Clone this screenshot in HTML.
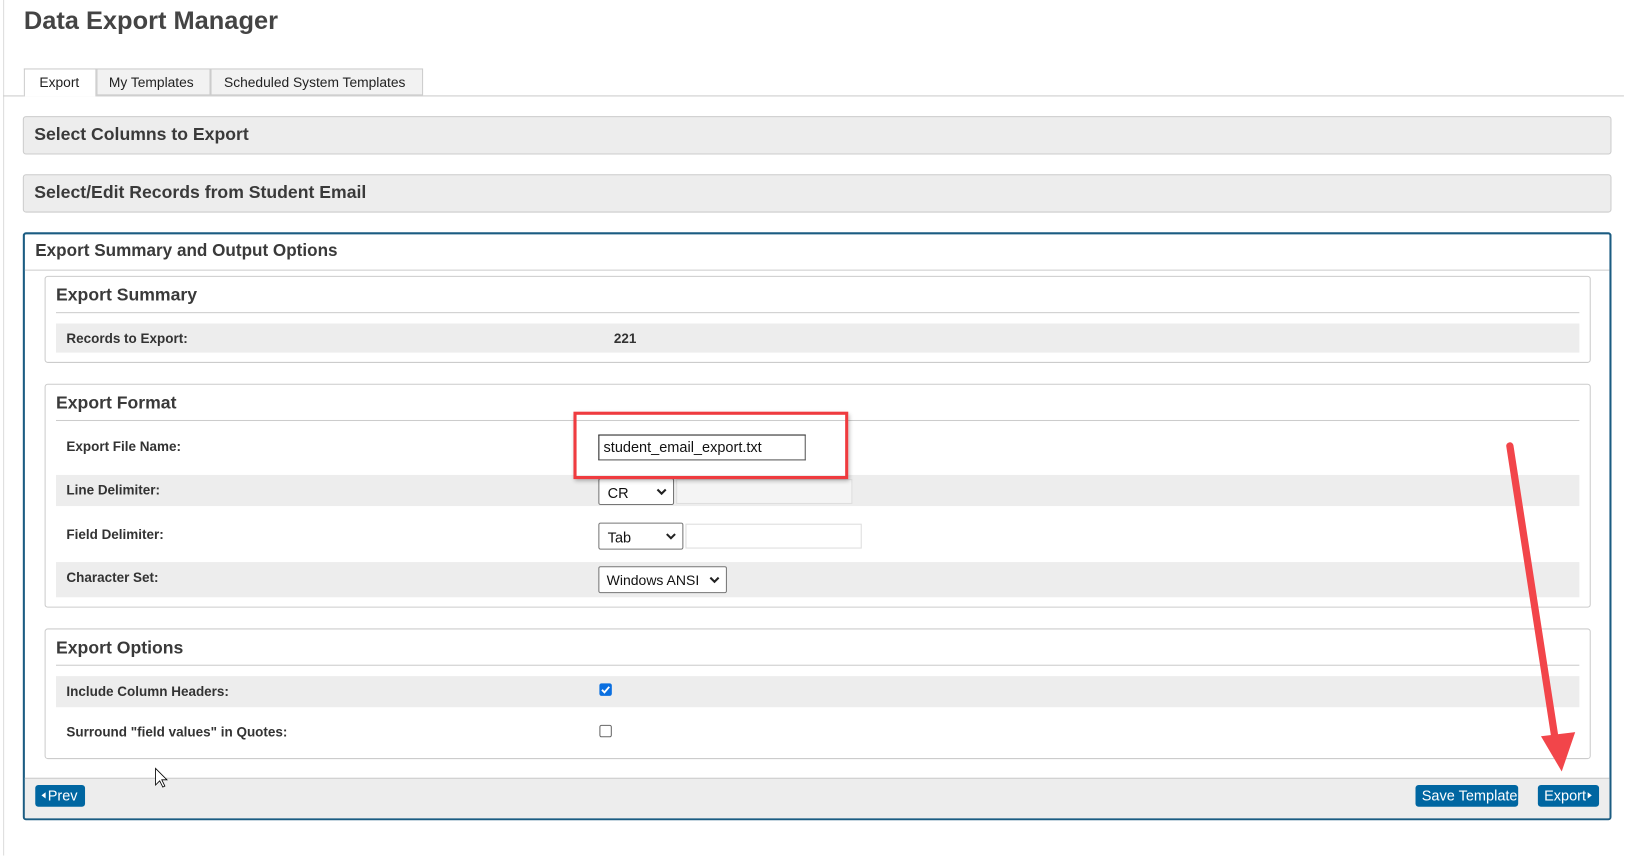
<!DOCTYPE html>
<html><head><style>
*{box-sizing:border-box;margin:0;padding:0}
body{width:1629px;height:825px;background:#fff;font-family:"Liberation Sans",Arial,sans-serif;color:#333;position:relative;overflow:hidden}
#w{position:absolute;left:0;top:0;width:1571px;height:796px;transform:scale(1.037);transform-origin:0 0}
.a{position:absolute}
.lbl{position:absolute;left:64px;font-size:13px;font-weight:bold;color:#333}
.h{position:absolute;font-size:17px;font-weight:bold;color:#3a3a3a}
.sel{position:absolute;height:26px;border:1px solid #767676;border-radius:2px;background:#fff;font-size:14px;padding:5px 0 0 8px;color:#111}
.sel svg{position:absolute;right:6px;top:9px}
.btn{position:absolute;top:757px;height:21px;background:#0066a1;color:#fff;border-radius:3px;font-size:14px;padding:2px 6px 0;white-space:nowrap}
.tri{display:inline-block;width:0;height:0;border-top:3.5px solid transparent;border-bottom:3.5px solid transparent;vertical-align:2px}
</style></head><body><div id="w">
<div class="a" style="left:3px;top:0;width:1px;height:825px;background:#ddd"></div>
<div class="a" style="left:23px;top:7px;font-size:24.5px;font-weight:bold;color:#444">Data Export Manager</div>
<div class="a" style="left:3px;top:92px;width:1563px;height:1px;background:#ccc"></div>
<div class="a" style="left:23px;top:66px;width:70px;height:27px;border:1px solid #ccc;border-bottom:none;background:#fff;font-size:13.3px;padding:5px 0 0 14px;color:#222">Export</div>
<div class="a" style="left:93px;top:66px;width:110px;height:26px;border:1px solid #ccc;background:#f2f2f2;font-size:13.3px;padding:5px 0 0 11px;color:#222">My Templates</div>
<div class="a" style="left:203px;top:66px;width:205px;height:26px;border:1px solid #ccc;background:#f2f2f2;font-size:13.3px;padding:5px 0 0 12px;color:#222">Scheduled System Templates</div>

<div class="a" style="left:22px;top:112px;width:1532px;height:37px;background:#ededed;border:1px solid #ccc;border-radius:3px"></div>
<div class="h" style="left:33px;top:120px;font-size:17px">Select Columns to Export</div>
<div class="a" style="left:22px;top:168px;width:1532px;height:37px;background:#ededed;border:1px solid #ccc;border-radius:3px"></div>
<div class="h" style="left:33px;top:176px;font-size:17px">Select/Edit Records from Student Email</div>

<div class="a" style="left:22px;top:224px;width:1532px;height:567px;border:2px solid #1b5c82;border-radius:3px"></div>
<div class="h" style="left:34px;top:233px;font-size:16.5px">Export Summary and Output Options</div>
<div class="a" style="left:24px;top:260px;width:1528px;height:1px;background:#ccc"></div>

<div class="a" style="left:43px;top:266px;width:1491px;height:84px;border:1px solid #ccc;border-radius:3px"></div>
<div class="h" style="left:54px;top:275px">Export Summary</div>
<div class="a" style="left:54px;top:301px;width:1469px;height:1px;background:#ccc"></div>
<div class="a" style="left:54px;top:312px;width:1469px;height:28px;background:#ededed"></div>
<div class="lbl" style="top:319px">Records to Export:</div>
<div class="a" style="left:592px;top:319px;font-size:13px;font-weight:bold">221</div>

<div class="a" style="left:43px;top:370px;width:1491px;height:216px;border:1px solid #ccc;border-radius:3px"></div>
<div class="h" style="left:54px;top:379px">Export Format</div>
<div class="a" style="left:54px;top:405px;width:1469px;height:1px;background:#ccc"></div>
<div class="lbl" style="top:423px">Export File Name:</div>
<div class="a" style="left:577px;top:419px;width:200px;height:25px;border:1px solid #555;border-top-color:#222;border-left-color:#222;font-size:14px;padding:3px 0 0 4px;color:#111">student_email_export.txt</div>
<div class="a" style="left:54px;top:458px;width:1469px;height:30px;background:#ededed"></div>
<div class="lbl" style="top:465px">Line Delimiter:</div>
<div class="sel" style="left:577px;top:461px;width:73px">CR<svg width="10" height="7"><path d="M1 1l4 4 4-4" stroke="#222" stroke-width="2" fill="none"/></svg></div>
<div class="a" style="left:652px;top:462px;width:170px;height:24px;border:1px solid #ddd;background:#f4f4f4"></div>
<div class="lbl" style="top:508px">Field Delimiter:</div>
<div class="sel" style="left:577px;top:504px;width:82px">Tab<svg width="10" height="7"><path d="M1 1l4 4 4-4" stroke="#222" stroke-width="2" fill="none"/></svg></div>
<div class="a" style="left:661px;top:505px;width:170px;height:24px;border:1px solid #ddd;background:#fff"></div>
<div class="a" style="left:54px;top:542px;width:1469px;height:34px;background:#ededed"></div>
<div class="lbl" style="top:549px">Character Set:</div>
<div class="sel" style="left:577px;top:546px;width:124px;padding-left:7px;font-size:13.5px">Windows ANSI<svg width="10" height="7"><path d="M1 1l4 4 4-4" stroke="#222" stroke-width="2" fill="none"/></svg></div>

<div class="a" style="left:43px;top:606px;width:1491px;height:126px;border:1px solid #ccc;border-radius:3px"></div>
<div class="h" style="left:54px;top:615px">Export Options</div>
<div class="a" style="left:54px;top:641px;width:1469px;height:1px;background:#ccc"></div>
<div class="a" style="left:54px;top:652px;width:1469px;height:30px;background:#ededed"></div>
<div class="lbl" style="top:659px">Include Column Headers:</div>
<div class="a" style="left:578px;top:659px;width:12px;height:12px;background:#0a6fe0;border-radius:2px"><svg width="12" height="12" style="position:absolute;left:0;top:0"><path d="M2.5 6.2l2.4 2.5 4.6-5.4" stroke="#fff" stroke-width="1.8" fill="none"/></svg></div>
<div class="lbl" style="top:698px">Surround "field values" in Quotes:</div>
<div class="a" style="left:578px;top:699px;width:12px;height:12px;border:1px solid #666;border-radius:2px;background:#fff"></div>

<div class="a" style="left:24px;top:750px;width:1528px;height:39px;background:#ededed;border-top:1px solid #ccc"></div>
<div class="btn" style="left:34px;width:48px;padding-left:6px"><span class="tri" style="border-right:4px solid #fff;margin-right:2px"></span>Prev</div>
<div class="btn" style="left:1365px;width:99px">Save Template</div>
<div class="btn" style="left:1483px;width:59px">Export<span class="tri" style="border-left:4px solid #fff;margin-left:2px"></span></div>

<div class="a" style="left:553px;top:397px;width:265px;height:65px;border:3px solid #ef3b3f;box-shadow:1px 2px 4px rgba(0,0,0,.3)"></div>
<svg class="a" style="left:0;top:0" width="1629" height="825"><line x1="1456" y1="430" x2="1500" y2="715" stroke="#f2454a" stroke-width="7" stroke-linecap="round"/><path d="M1486 710l33 -4 -13 38z" fill="#f2454a"/>
<path d="M150 741v16l4-4 3 6 2-1-3-6h5z" fill="#fff" stroke="#000" stroke-width="0.8"/></svg>
</div></body></html>
